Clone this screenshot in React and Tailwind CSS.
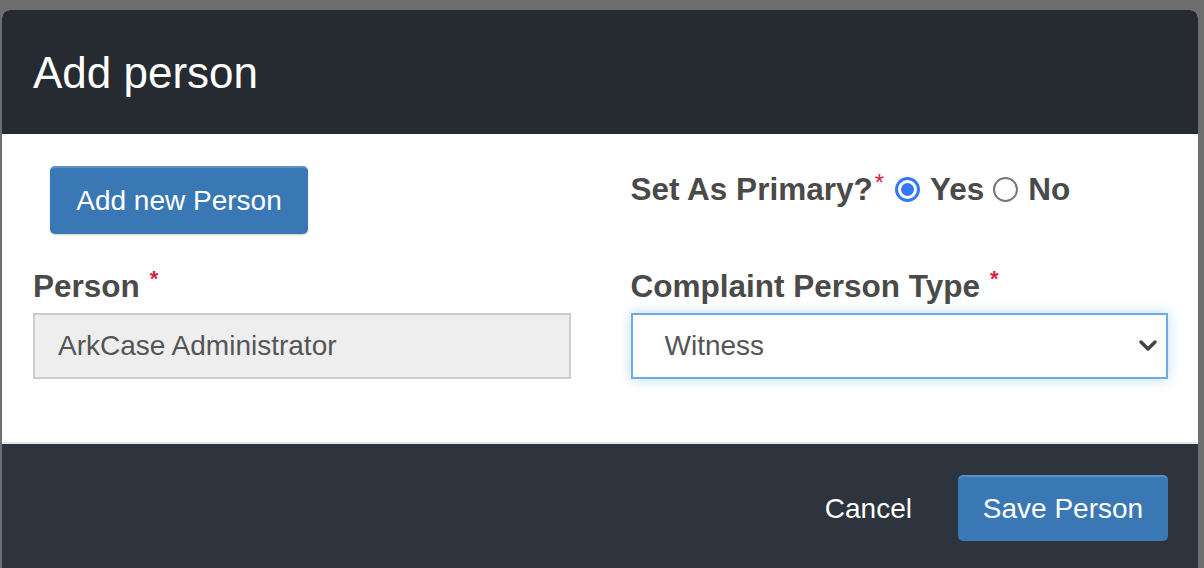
import { useState } from 'react'

const font = { fontFamily: '"Liberation Sans", Arial, sans-serif' }

function Star() {
  return <span className="ml-[10px] align-top text-[22px] leading-none text-[#d9214b]">*</span>
}

function Radio({ checked, onClick }) {
  return (
    <button
      type="button"
      onClick={onClick}
      className={
        checked
          ? 'flex h-[25px] w-[25px] items-center justify-center rounded-full border-[3px] border-[#3478f6] bg-white'
          : 'flex h-[25px] w-[25px] items-center justify-center rounded-full border-2 border-[#767676] bg-white'
      }
    >
      {checked && <span className="h-[13px] w-[13px] rounded-full bg-[#3478f6]" />}
    </button>
  )
}

export default function App() {
  const [primary, setPrimary] = useState(true)
  const [type, setType] = useState('Witness')

  return (
    <div className="h-[568px] w-[1204px] overflow-hidden bg-[#6e6e6e] pl-[2px] pr-[6px] pt-[10px]" style={font}>
      <div className="flex h-[600px] flex-col overflow-hidden rounded-t-[8px] bg-white">
        <div className="h-[124px] shrink-0 bg-[#262a31] pl-[31px] pt-[39px]">
          <h4 className="text-[44px] leading-[48px] text-white">Add person</h4>
        </div>

        <div className="grid h-[310px] shrink-0 grid-cols-2 content-start gap-x-[60px] border-b-2 border-[#e5e5e5] px-[31px] pt-[32px] pr-[30px]">
          <div>
            <button className="ml-[17px] h-[68px] w-[258px] rounded-[5px] border-t-2 border-[#5a8fc6] bg-[#3a78b5] text-[28px] text-white shadow-[0_1px_2px_rgba(0,0,0,0.2)]">
              Add new Person
            </button>
          </div>
          <div className="mt-[5px] flex h-[36px] items-center self-start">
            <span className="text-[31.5px] font-bold leading-[36px] text-[#4a4a4a]">Set As Primary?</span>
            <span className="ml-[2px] self-start text-[24px] leading-none text-[#d9214b]">*</span>
            <span className="ml-[11px] flex items-center">
              <Radio checked={primary} onClick={() => setPrimary(true)} />
              <span className="ml-[10px] text-[31.5px] font-bold leading-[36px] text-[#4a4a4a]">Yes</span>
              <span className="ml-[9px]">
                <Radio checked={!primary} onClick={() => setPrimary(false)} />
              </span>
              <span className="ml-[10px] text-[31.5px] font-bold leading-[36px] text-[#4a4a4a]">No</span>
            </span>
          </div>

          <div className="mt-[34px]">
            <label className="block text-[31.5px] font-bold leading-[36px] text-[#4a4a4a]">
              Person
              <Star />
            </label>
            <div className="mt-[9px] flex h-[66px] items-center border-2 border-[#cccccc] bg-[#eeeeee] px-[23px] text-[28px] text-[#555555]">
              ArkCase Administrator
            </div>
          </div>
          <div className="mt-[34px]">
            <label className="block text-[31.5px] font-bold leading-[36px] text-[#4a4a4a]">
              Complaint Person Type
              <Star />
            </label>
            <div className="relative mt-[9px]">
              <select
                value={type}
                onChange={(e) => setType(e.target.value)}
                className="h-[66px] w-full appearance-none border-2 border-[#6eaae4] bg-white pl-[32px] text-[28px] text-[#555555] shadow-[0_0_12px_rgba(102,175,233,0.45)] outline-none"
                style={font}
              >
                <option>Witness</option>
                <option>Complainant</option>
                <option>Subject</option>
              </select>
              <svg
                className="pointer-events-none absolute right-[10px] top-[26px] h-[14px] w-[20px]"
                viewBox="0 0 20 14"
                fill="none"
                stroke="#444"
                strokeWidth="3.5"
                strokeLinecap="round"
                strokeLinejoin="round"
              >
                <path d="M3 3l7 7 7-7" />
              </svg>
            </div>
          </div>
        </div>

        <div className="flex flex-1 items-start justify-end bg-[#2e343e] pr-[30px] pt-[31px]">
          <button className="mt-[18px] text-[28px] leading-[32px] text-white">Cancel</button>
          <button className="ml-[46px] h-[66px] w-[210px] rounded-[5px] border-t-2 border-[#5a8fc6] bg-[#3a78b5] text-[28px] text-white">
            Save Person
          </button>
        </div>
      </div>
    </div>
  )
}
